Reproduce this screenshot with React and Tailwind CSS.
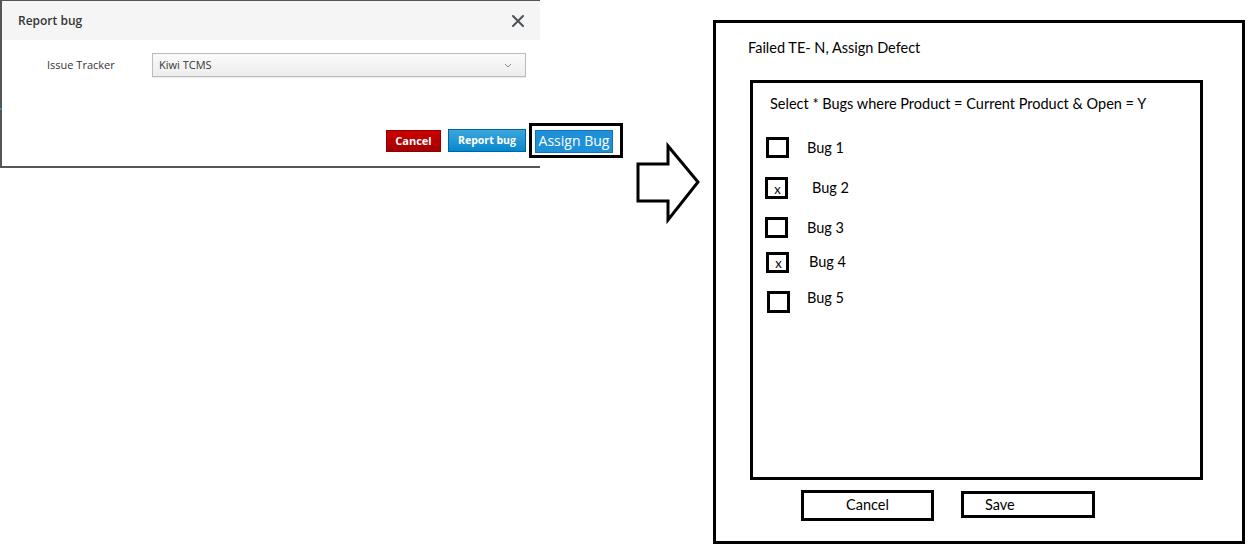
import React from "react";

const openSans = { fontFamily: '"Open Sans", "Noto Sans", sans-serif' };
const lato = { fontFamily: 'Lato, "Open Sans", sans-serif' };

function CloseIcon() {
  return (
    <svg width="12" height="12" viewBox="0 0 12 12" className="shrink-0">
      <path d="M1 1 L11 11 M11 1 L1 11" stroke="#4d5258" strokeWidth="2" strokeLinecap="round" />
    </svg>
  );
}

function ChevronDown() {
  return (
    <svg width="8" height="5" viewBox="0 0 8 5" className="shrink-0">
      <path d="M1 1 L4 4 L7 1" stroke="#8b8d8f" strokeWidth="1" fill="none" />
    </svg>
  );
}

function ReportBugDialog() {
  return (
    <div
      className="relative w-[540px] h-[168px] border-t border-l-2 border-b-2 border-[#555] bg-white"
      style={openSans}
    >
      <span className="absolute left-[-2px] top-[107px] w-[2px] h-[2px] bg-[#3a8aa8]" />
      <div className="flex items-center justify-between h-[39px] bg-[#f5f5f5] pl-[16px] pr-[16px]">
        <span className="text-[12px] font-semibold text-[#363636] leading-none">Report bug</span>
        <CloseIcon />
      </div>
      <div className="flex items-center mt-[13px] pl-[45px]">
        <span className="w-[105px] shrink-0 text-[11px] text-[#363636]">Issue Tracker</span>
        <div className="flex items-center justify-between w-[374px] h-[24px] shrink-0 border border-[#bbb] bg-gradient-to-b from-[#fafafa] to-[#ededed] shadow-[0_1px_1px_rgba(0,0,0,0.08)] pl-[6px] pr-[13px]">
          <span className="text-[11px] text-[#363636]">Kiwi TCMS</span>
          <ChevronDown />
        </div>
      </div>
      <div className="flex items-center mt-[46px] pl-[384px]">
        <button className="shrink-0 w-[55px] h-[22px] border border-[#8b0000] bg-gradient-to-b from-[#cc0000] to-[#a30000] text-white text-[11px] font-bold leading-none">
          Cancel
        </button>
        <button className="shrink-0 ml-[7px] w-[78px] h-[23px] border border-[#00659c] bg-gradient-to-b from-[#39a5dc] to-[#0088ce] text-white text-[10.5px] font-bold leading-none">
          Report bug
        </button>
        <div className="shrink-0 ml-[3px] w-[94px] h-[35px] border-[3px] border-black pl-[3px] pt-[2px]">
          <button className="w-[78px] h-[23px] border border-[#1572b6] bg-[#1e90d8] text-white text-[14px] leading-none">
            Assign Bug
          </button>
        </div>
      </div>
    </div>
  );
}

function Arrow() {
  return (
    <svg width="77" height="86" viewBox="0 0 77 86" className="shrink-0 mt-[140px]">
      <polygon
        points="2,24 32,24 32,6 62,42 32,80 32,61 2,61"
        fill="white"
        stroke="black"
        strokeWidth="3"
        strokeLinejoin="miter"
      />
    </svg>
  );
}

const bugs = [
  { label: "Bug 1", row: "mt-[23px] items-center", box: "ml-[13px] h-[21px]", text: "ml-[18px]", checked: false },
  { label: "Bug 2", row: "mt-[19px] items-center", box: "ml-[12px] h-[22px]", text: "ml-[24px]", checked: true },
  { label: "Bug 3", row: "mt-[18px] items-center", box: "ml-[12px] h-[21px]", text: "ml-[19px]", checked: false },
  { label: "Bug 4", row: "mt-[14px] items-center", box: "ml-[13px] h-[21px]", text: "ml-[20px] mb-[1px]", checked: true },
  { label: "Bug 5", row: "mt-[18px] items-start", box: "ml-[14px] h-[22px]", text: "ml-[17px] -mt-[3px]", checked: false },
];

function BugRow({ bug }) {
  return (
    <div className={`flex ${bug.row}`}>
      <div className={`flex items-end justify-center shrink-0 w-[23px] border-[3px] border-black ${bug.box}`}>
        {bug.checked && <span className="text-[13px] leading-[13px] pl-[2px]">x</span>}
      </div>
      <span className={`leading-[20px] ${bug.text}`}>{bug.label}</span>
    </div>
  );
}

function AssignDefectMockup() {
  return (
    <div
      className="shrink-0 mt-[20px] w-[532px] h-[524px] border-[3px] border-black text-[14.5px] text-black"
      style={lato}
    >
      <div className="mt-[15px] pl-[32px] leading-[20px]">Failed TE- N, Assign Defect</div>
      <div className="mt-[22px] ml-[34px] w-[453px] h-[400px] border-[3px] border-black">
        <div className="mt-[11px] pl-[17px] leading-[20px]">
          Select * Bugs where Product = Current Product &amp; Open = Y
        </div>
        {bugs.map((bug) => (
          <BugRow key={bug.label} bug={bug} />
        ))}
      </div>
      <div className="flex items-start mt-[10px] ml-[85px]">
        <div className="flex items-center justify-center w-[133px] h-[31px] border-[3px] border-black pb-[2px]">
          Cancel
        </div>
        <div className="flex items-center ml-[27px] mt-[1px] w-[134px] h-[27px] border-[3px] border-black pl-[21px]">
          Save
        </div>
      </div>
    </div>
  );
}

export default function App() {
  return (
    <div className="flex w-[1256px] h-[552px] bg-white overflow-hidden">
      <div className="w-[636px] shrink-0">
        <ReportBugDialog />
      </div>
      <Arrow />
      <AssignDefectMockup />
    </div>
  );
}
